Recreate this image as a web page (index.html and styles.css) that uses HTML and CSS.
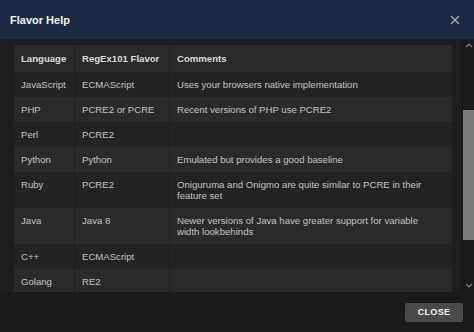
FILE: index.html
```html
<!DOCTYPE html>
<html>
  <head>
    <meta charset="utf-8" />
    <title>Flavor Help</title>
    <meta name="viewport" content="width=device-width, initial-scale=1" />
    <link rel="stylesheet" href="styles.css">
  </head>
  <body>
    <div class="modal">
      <div class="modal-header">
        <h3>Flavor Help</h3>
        <button class="close-x" aria-label="Close">
          <svg width="10" height="10" viewBox="0 0 10 10">
            <path d="M1 1 L9 9 M9 1 L1 9" stroke="#a9adb3" stroke-width="1.3" fill="none" />
          </svg>
        </button>
      </div>
      <div class="modal-body">
        <div class="content">
          <table class="flavors">
            <thead>
              <tr>
                <th class="col-lang">Language</th>
                <th class="col-flavor">RegEx101 Flavor</th>
                <th class="col-comments">Comments</th>
              </tr>
            </thead>
            <tbody>
              <tr><td>JavaScript</td><td>ECMAScript</td><td class="note">Uses your browsers native implementation</td></tr>
              <tr><td>PHP</td><td>PCRE2 or PCRE</td><td class="note">Recent versions of PHP use PCRE2</td></tr>
              <tr><td>Perl</td><td>PCRE2</td><td class="note"></td></tr>
              <tr><td>Python</td><td>Python</td><td class="note">Emulated but provides a good baseline</td></tr>
              <tr><td>Ruby</td><td>PCRE2</td><td class="note">Oniguruma and Onigmo are quite similar to PCRE in their feature set</td></tr>
              <tr><td>Java</td><td>Java 8</td><td class="note">Newer versions of Java have greater support for variable width lookbehinds</td></tr>
              <tr><td>C++</td><td>ECMAScript</td><td class="note"></td></tr>
              <tr><td>Golang</td><td>RE2</td><td class="note"></td></tr>
            </tbody>
          </table>
        </div>
        <div class="scrollbar">
          <svg class="arrow" width="8" height="5" viewBox="0 0 8 5"><path d="M1 4 L4 1 L7 4" stroke="#8a8a8a" stroke-width="1.2" fill="none" /></svg>
          <div class="track"><div class="thumb"></div></div>
          <svg class="arrow" width="8" height="5" viewBox="0 0 8 5"><path d="M1 1 L4 4 L7 1" stroke="#8a8a8a" stroke-width="1.2" fill="none" /></svg>
        </div>
      </div>
      <div class="modal-footer">
        <button class="close-btn">CLOSE</button>
      </div>
    </div>
  </body>
</html>
```

FILE: styles.css
```css
body {
  margin: 0;
  padding: 0;
  background-color: #1c1c1c;
  font-family: "Liberation Sans", Arial, sans-serif;
}
.modal {
  width: 474px;
  height: 332px;
  display: flex;
  flex-direction: column;
  overflow: hidden;
}
.modal-header {
  height: 39px;
  flex: none;
  background-color: #1b2a42;
  border-bottom: 1px solid #16202f;
  display: flex;
  align-items: center;
  justify-content: space-between;
  padding: 0 14px 0 10px;
}
.modal-header h3 {
  margin: 0;
  color: #f2f2f2;
  font-size: 11px;
  font-weight: bold;
}
.close-x {
  background: none;
  border: none;
  padding: 0;
  width: 10px;
  height: 10px;
  display: flex;
}
.modal-body {
  height: 252px;
  flex: none;
  display: flex;
  background-color: #1e1e1e;
}
.content {
  flex: 1;
  overflow: hidden;
  padding: 5px 9px 0 14px;
}
.flavors {
  width: 100%;
  border-collapse: collapse;
  table-layout: fixed;
  font-size: 9.6px;
  line-height: 11px;
  color: #c4c4c4;
}
.flavors th,
.flavors td {
  text-align: left;
  vertical-align: top;
  padding: 7px 8px 7px 7px;
  border-left: 1px solid #1f1f1f;
}
.flavors th:first-child,
.flavors td:first-child {
  border-left: none;
}
.flavors th {
  font-weight: bold;
  color: #dcdcdc;
  background-color: #2a2a2a;
  padding-top: 8px;
  padding-bottom: 8px;
}
.flavors .note {
  padding-right: 16px;
}
.col-lang {
  width: 45px;
}
.col-flavor {
  width: 79px;
}
.flavors tbody tr:nth-child(odd) td {
  background-color: #232323;
}
.flavors tbody tr:nth-child(even) td {
  background-color: #2a2a2a;
}
.scrollbar {
  width: 13px;
  flex: none;
  background-color: #1a1a1a;
  border-left: 1px solid #171717;
  display: flex;
  flex-direction: column;
  align-items: center;
  padding: 3px 0 4px;
  box-sizing: border-box;
}
.arrow {
  flex: none;
  margin-left: 1px;
}
.track {
  flex: 1;
  width: 100%;
  display: flex;
  flex-direction: column;
}
.thumb {
  margin-top: 62px;
  height: 130px;
  width: 12px;
  margin-left: 1px;
  background-color: #7b7b7b;
}
.modal-footer {
  height: 40px;
  flex: none;
  background-color: #1b1b1b;
  display: flex;
  align-items: center;
  justify-content: flex-end;
  padding-right: 11px;
}
.close-btn {
  width: 58px;
  height: 19px;
  background-color: #4a4a4a;
  color: #f0f0f0;
  border: none;
  border-radius: 2px;
  font-family: "Liberation Sans", Arial, sans-serif;
  font-size: 9px;
  font-weight: bold;
  letter-spacing: 0.3px;
  padding: 0;
}
```
